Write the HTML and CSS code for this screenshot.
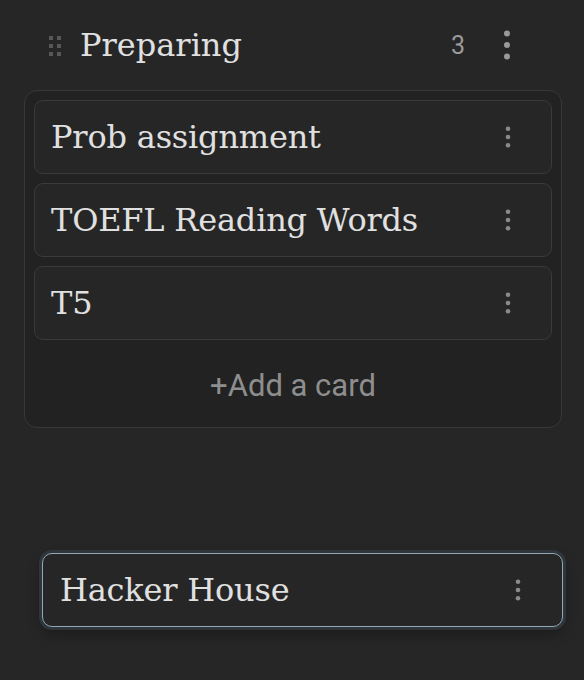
FILE: index.html
```html
<!DOCTYPE html>
<html lang="en">
<head>
<meta charset="utf-8">
<title>Board</title>
<link rel="stylesheet" href="styles.css">
</head>
<body>
<div class="board">
  <section class="column">
    <header class="col-header">
      <span class="handle" aria-hidden="true">
        <i></i><i></i><i></i><i></i><i></i><i></i>
      </span>
      <h2 class="col-title">Preparing</h2>
      <span class="col-count">3</span>
      <button class="col-menu" aria-label="Column menu">
        <svg width="8" height="30" viewBox="0 0 8 30"><circle cx="4" cy="3.5" r="3"/><circle cx="4" cy="15" r="3"/><circle cx="4" cy="26.5" r="3"/></svg>
      </button>
    </header>
    <div class="card-list">
      <div class="card">
        <span class="card-title">Prob assignment</span>
        <span class="card-menu"><svg width="6" height="22" viewBox="0 0 6 22"><circle cx="3" cy="2.7" r="2.3"/><circle cx="3" cy="11" r="2.3"/><circle cx="3" cy="19.3" r="2.3"/></svg></span>
      </div>
      <div class="card">
        <span class="card-title">TOEFL Reading Words</span>
        <span class="card-menu"><svg width="6" height="22" viewBox="0 0 6 22"><circle cx="3" cy="2.7" r="2.3"/><circle cx="3" cy="11" r="2.3"/><circle cx="3" cy="19.3" r="2.3"/></svg></span>
      </div>
      <div class="card">
        <span class="card-title">T5</span>
        <span class="card-menu"><svg width="6" height="22" viewBox="0 0 6 22"><circle cx="3" cy="2.7" r="2.3"/><circle cx="3" cy="11" r="2.3"/><circle cx="3" cy="19.3" r="2.3"/></svg></span>
      </div>
      <div class="add-card">+Add a card</div>
    </div>
  </section>
  <div class="card drag-preview">
    <span class="card-title">Hacker House</span>
    <span class="card-menu"><svg width="6" height="22" viewBox="0 0 6 22"><circle cx="3" cy="2.7" r="2.3"/><circle cx="3" cy="11" r="2.3"/><circle cx="3" cy="19.3" r="2.3"/></svg></span>
  </div>
</div>
</body>
</html>
```
FILE: styles.css
```css
* { box-sizing: border-box; }
html, body {
  margin: 0;
  padding: 0;
  background: #262626;
  height: 100%;
}
body {
  font-family: "DejaVu Serif", serif;
  color: #e0e0e0;
}
.board {
  padding: 0 22px 0 24px;
}
.column {
  width: 538px;
}
.col-header {
  display: flex;
  align-items: center;
  height: 90px;
  padding-left: 25px;
}
.handle {
  display: grid;
  grid-template-columns: 4px 4px;
  grid-auto-rows: 4px;
  column-gap: 4px;
  row-gap: 4px;
  margin-top: 1px;
}
.handle i {
  display: block;
  width: 4px;
  height: 4px;
  background: #575757;
}
.col-title {
  margin: 0 0 0 19px;
  font-size: 32px;
  line-height: 40px;
  font-weight: normal;
  flex: 1;
}
.col-count {
  font-family: Roboto, "Liberation Sans", sans-serif;
  font-size: 25px;
  color: #9a9a9a;
  margin-right: 30px;
}
.col-menu {
  background: none;
  border: 0;
  padding: 0;
  width: 24px;
  height: 30px;
  display: flex;
  align-items: center;
  justify-content: center;
  margin-right: 43px;
}
.col-menu svg { fill: #9a9a9a; display: block; }
.card-list {
  display: flex;
  flex-direction: column;
  gap: 9px;
  padding: 9px;
  background: #222222;
  border: 1px solid #383838;
  border-radius: 13px;
}
.card {
  display: flex;
  align-items: center;
  background: #262626;
  border: 1px solid #3a3a3a;
  border-radius: 9px;
  padding: 16px 40px 16px 16px;
  height: 74px;
}
.card-title {
  flex: 1;
  font-size: 32px;
  line-height: 40px;
  letter-spacing: -0.2px;
  white-space: nowrap;
}
.card-menu { display: flex; }
.card-menu svg { fill: #8a8a8a; display: block; }
.add-card {
  height: 69px;
  padding-top: 3px;
  display: flex;
  align-items: center;
  justify-content: center;
  font-family: Roboto, "Liberation Sans", sans-serif;
  font-size: 31px;
  color: #8e8e8e;
}
.drag-preview {
  margin: 125px 0 0 18px;
  width: 521px;
  border: 1.5px solid #90a8b8;
  border-radius: 10px;
  box-shadow: 0 0 0 3px #30353a, 0 6px 14px rgba(0,0,0,0.35);
  padding-left: 17px;
  padding-right: 41px;
}
```
